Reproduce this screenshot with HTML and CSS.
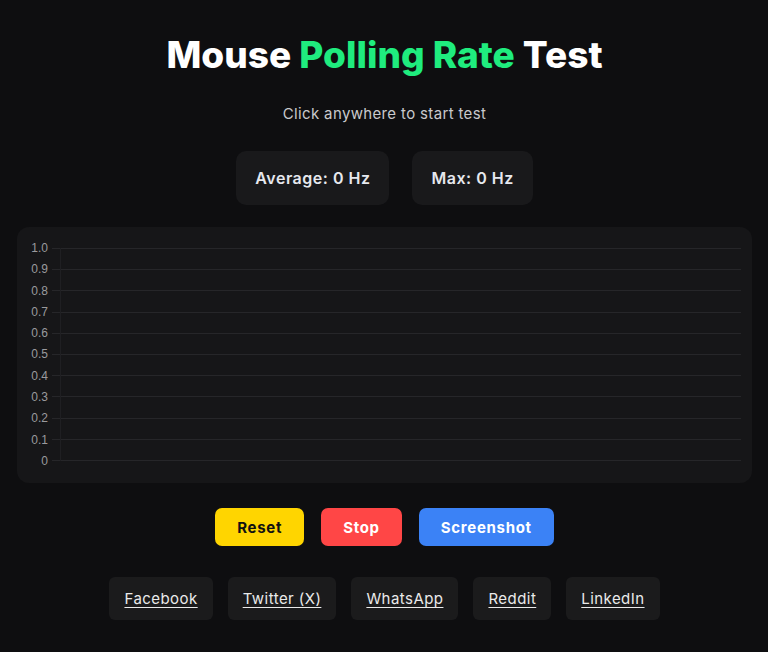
FILE: index.html
```html
<!DOCTYPE html>
<html lang="en">
<head>
<meta charset="utf-8">
<title>Mouse Polling Rate Test</title>
<link rel="stylesheet" href="styles.css">
</head>
<body>
<main class="page">
  <h1 class="title">Mouse <span class="accent">Polling Rate</span> Test</h1>
  <p class="hint">Click anywhere to start test</p>
  <div class="stats">
    <div class="stat">Average: 0 Hz</div>
    <div class="stat">Max: 0 Hz</div>
  </div>
  <section class="chart">
    <div class="labels">
      <span>1.0</span><span>0.9</span><span>0.8</span><span>0.7</span><span>0.6</span><span>0.5</span><span>0.4</span><span>0.3</span><span>0.2</span><span>0.1</span><span>0</span>
    </div>
    <div class="ticks">
      <i></i><i></i><i></i><i></i><i></i><i></i><i></i><i></i><i></i><i></i><i></i>
    </div>
    <div class="plot">
      <i></i><i></i><i></i><i></i><i></i><i></i><i></i><i></i><i></i><i></i><i></i>
    </div>
  </section>
  <div class="actions">
    <button class="btn btn-reset">Reset</button>
    <button class="btn btn-stop">Stop</button>
    <button class="btn btn-shot">Screenshot</button>
  </div>
  <nav class="share">
    <a class="share-link" href="#">Facebook</a>
    <a class="share-link" href="#">Twitter (X)</a>
    <a class="share-link" href="#">WhatsApp</a>
    <a class="share-link" href="#">Reddit</a>
    <a class="share-link" href="#">LinkedIn</a>
  </nav>
</main>
</body>
</html>
```

FILE: styles.css
```css
* { box-sizing: border-box; }
html, body { margin: 0; padding: 0; }
body {
  background: #0e0e10;
  color: #e5e5e5;
  font-family: "Inter", "Open Sans", sans-serif;
  height: 652px;
  overflow: hidden;
}
.page {
  padding: 0 16px 0 17px;
  display: flex;
  flex-direction: column;
  align-items: center;
}
.title {
  margin: 31px 0 0;
  font-size: 37px;
  line-height: 48px;
  font-weight: 800;
  color: #ffffff;
  letter-spacing: 0;
}
.accent { color: #1fec7e; }
.hint {
  margin: 25px 0 0;
  font-size: 15px;
  line-height: 20px;
  color: #c9c9cc;
  letter-spacing: 0.35px;
}
.stats {
  margin-top: 27px;
  display: flex;
  gap: 23px;
}
.stat {
  background: #19191b;
  border-radius: 10px;
  height: 54px;
  padding: 0 19px;
  display: flex;
  align-items: center;
  font-size: 16px;
  font-weight: 600;
  color: #e6e8ee;
  letter-spacing: 0.5px;
}
.chart {
  margin-top: 22px;
  width: 100%;
  height: 256px;
  background: #161618;
  border-radius: 12px;
  padding: 21px 11px 22px 0;
  display: flex;
}
.labels {
  width: 31px;
  margin: -7px 0;
  display: flex;
  flex-direction: column;
  justify-content: space-between;
  align-items: flex-end;
  font-family: "Liberation Sans", Arial, sans-serif;
  font-size: 12px;
  line-height: 14px;
  color: #9a9a9d;
}
.ticks {
  width: 8px;
  margin-left: 4px;
  display: flex;
  flex-direction: column;
  justify-content: space-between;
}
.plot {
  flex: 1;
  border-left: 1px solid #1f1f22;
  display: flex;
  flex-direction: column;
  justify-content: space-between;
}
.ticks i, .plot i {
  display: block;
  height: 1px;
  background: #262629;
}
.actions {
  margin-top: 25px;
  display: flex;
  gap: 17px;
}
.btn {
  border: 0;
  height: 38px;
  padding: 0 22px;
  border-radius: 7px;
  font-family: inherit;
  font-size: 15px;
  font-weight: 700;
  letter-spacing: 0.7px;
  cursor: pointer;
}
.btn-reset { background: #ffd500; color: #111; }
.btn-stop { background: #ff4646; color: #fff; }
.btn-shot { background: #3b82f6; color: #fff; }
.share {
  margin-top: 31px;
  display: flex;
  gap: 15px;
}
.share-link {
  height: 43px;
  padding: 0 15px;
  display: flex;
  align-items: center;
  background: #1b1b1c;
  border-radius: 6px;
  color: #eaeaea;
  font-size: 15px;
  letter-spacing: 0.45px;
  text-decoration: underline;
  text-underline-offset: 3px;
}
```
